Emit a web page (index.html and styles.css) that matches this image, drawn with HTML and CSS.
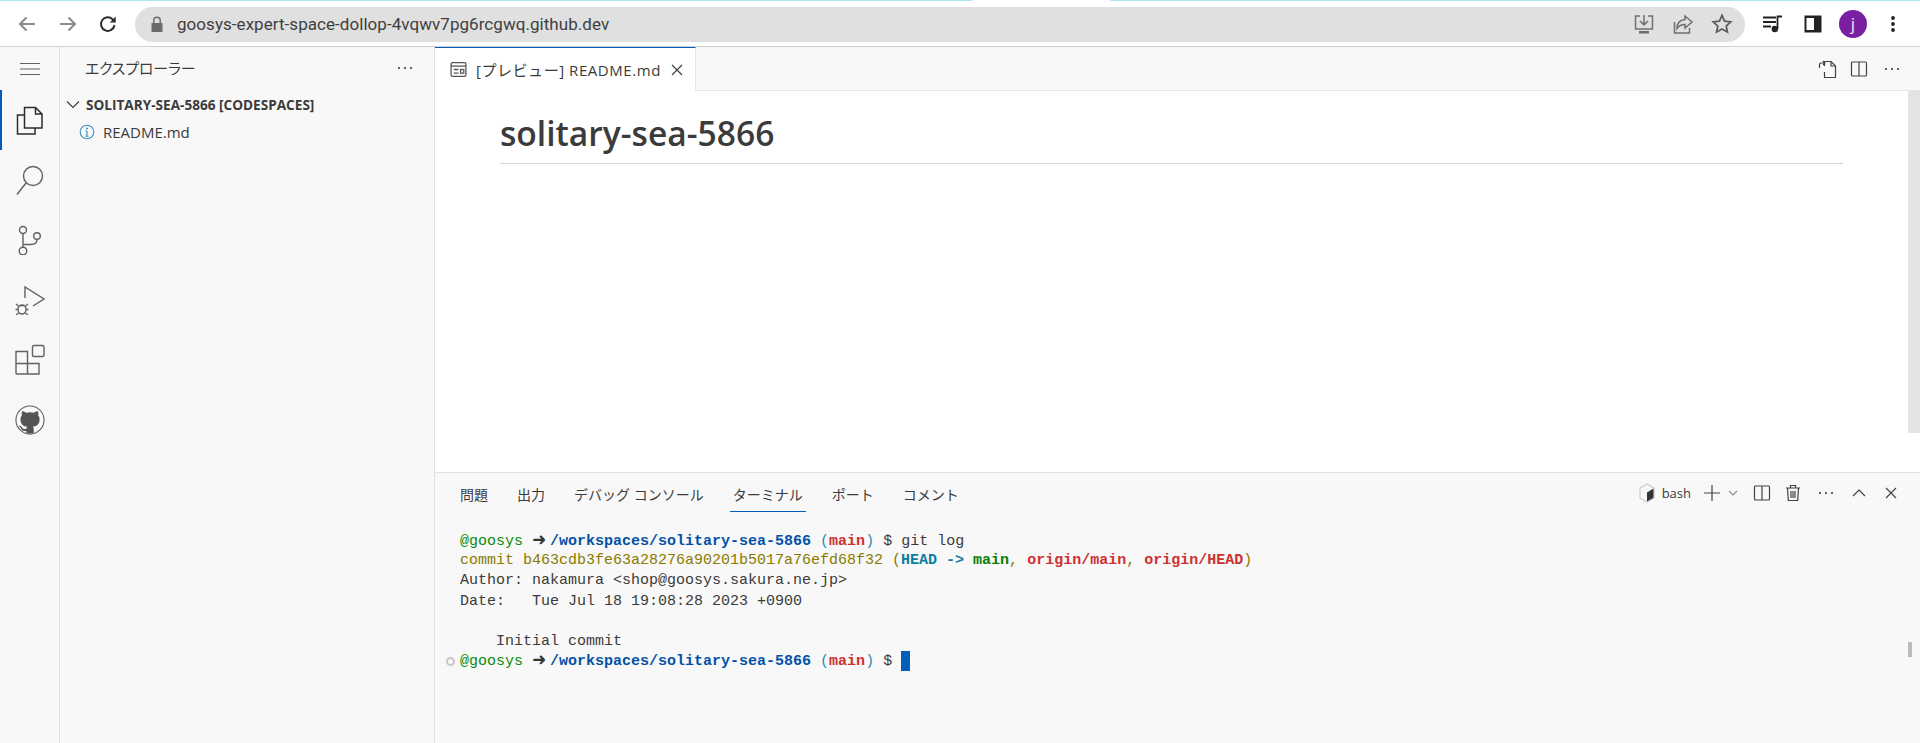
FILE: index.html
```html
<!DOCTYPE html>
<html lang="ja">
<head>
<meta charset="utf-8">
<title>README.md</title>
<link rel="stylesheet" href="styles.css">
</head>
<body>
<header class="chrome">
  <div class="strip"><span class="strip-a"></span><span class="strip-gap"></span><span class="strip-b"></span></div>
  <div class="toolbar">
    <button class="tb tb-back"><svg width="20" height="20" viewBox="0 0 20 20"><path d="M18 10H3M9.500 3.500 3 10l6.500 6.500" class="s-grey"/></svg></button>
    <button class="tb tb-fwd"><svg width="20" height="20" viewBox="0 0 20 20"><path d="M2 10h15M10.500 3.500 17 10l-6.500 6.500" class="s-grey"/></svg></button>
    <button class="tb tb-reload"><svg width="20" height="20" viewBox="0 0 20 20"><path d="M16.500 11a6.800 6.800 0 1 1-1.800-5.600L17 7.700" class="s-dark"/><path d="M17.700 2.500v6h-6z" class="f-dark"/></svg></button>
    <div class="pill">
      <svg class="lock" width="14" height="18" viewBox="0 0 14 18"><path d="M3 8V5.500a4 4 0 0 1 8 0V8h1.500v9h-11V8zm1.500 0h5V5.500a2.500 2.500 0 0 0-5 0z" class="f-mid"/></svg>
      <span class="url">goosys-expert-space-dollop-4vqwv7pg6rcgwq.github.dev</span>
      <span class="pill-icons">
        <svg width="22" height="22" viewBox="0 0 22 22"><path d="M7 3H2.500v13h17V3H15M11 2v9M7 8l4 4 4-4" class="s-grey2"/><path d="M6 18h10v2.500H6z" class="f-mid"/></svg>
        <svg width="22" height="22" viewBox="0 0 22 22"><path d="M2.500 9v11h15v-5" class="s-grey2"/><path d="M13 3l7 6-7 6v-3.500c-4 0-6 1-8 4 0-5 3-8.500 8-9z" class="s-grey2"/></svg>
        <svg width="22" height="22" viewBox="0 0 22 22"><path d="m11 2.500 2.600 5.600 6.100.7-4.500 4.200 1.200 6-5.400-3-5.400 3 1.200-6-4.500-4.200 6.100-.7z" class="s-star"/></svg>
      </span>
    </div>
    <button class="tb tb-first"><svg width="22" height="20" viewBox="0 0 22 20"><path d="M1 3.500h13M1 8h13M1 12.500h8" class="s-ink"/><path d="M15.500 15V2.500H20" class="s-ink"/><circle cx="12.800" cy="15" r="3.200" class="f-ink"/></svg></button>
    <button class="tb"><svg width="20" height="20" viewBox="0 0 20 20"><path d="M1.500 1.500h17v17h-17z" class="f-ink"/><path d="M3.500 4h7.500v12H3.500z" class="f-white"/></svg></button>
    <button class="tb"><span class="avatar">j</span></button>
    <button class="tb"><svg width="6" height="20" viewBox="0 0 6 20"><circle cx="3" cy="4" r="1.900" class="f-ink"/><circle cx="3" cy="10" r="1.900" class="f-ink"/><circle cx="3" cy="16" r="1.900" class="f-ink"/></svg></button>
  </div>
</header>

<main class="workbench">
  <nav class="activity">
    <div class="menu"><svg width="20" height="14" viewBox="0 0 20 14"><path d="M0 1.500h20M0 7h20M0 12.500h20" class="s-act-thin"/></svg></div>
    <div class="act act-on"><svg width="30" height="30" viewBox="0 0 30 30"><path d="M9.500 2.500h11l6.500 6.500v14H9.500zM20.500 2.500V9H27" class="s-act-ink"/><path d="M9.500 10H2.500v19H20v-6" class="s-act-ink"/></svg></div>
    <div class="act"><svg width="30" height="30" viewBox="0 0 30 30"><circle cx="18" cy="11" r="9.500" class="s-act"/><path d="M11 18 2 29.500" class="s-act"/></svg></div>
    <div class="act"><svg width="30" height="30" viewBox="0 0 30 30"><circle cx="8" cy="5" r="3.500" class="s-act"/><circle cx="8" cy="26" r="3.800" class="s-act"/><circle cx="22" cy="11" r="3.300" class="s-act"/><path d="M8 8.500v13.700M22 14.300c0 4-3 5.200-6 5.200H8" class="s-act"/></svg></div>
    <div class="act"><svg width="30" height="30" viewBox="0 0 30 30"><path d="M10 13V2l19 12-11 7" class="s-act"/><ellipse cx="7" cy="24.500" rx="4" ry="4.500" class="s-act"/><path d="M3 24.500H.5M11 24.500h2.500M3.500 21 1 19M10.500 21 13 19M3.500 28 1 30M10.500 28 13 30M4.500 20.500h5" class="s-act"/></svg></div>
    <div class="act"><svg width="30" height="32" viewBox="0 0 30 32"><rect x="17.500" y="1.500" width="11.500" height="11" rx="1.500" class="s-act"/><path d="M1 7.500h11.500v12H24V30H2a1 1 0 0 1-1-1zM1 19.500h11.500V30" class="s-act"/></svg></div>
    <div class="act"><svg width="30" height="30" viewBox="0 0 16 16"><circle cx="8" cy="8" r="7.200" class="f-cat"/><path d="M8 0C3.580 0 0 3.580 0 8c0 3.540 2.290 6.530 5.470 7.590.4.070.55-.17.55-.38 0-.19-.01-.82-.01-1.490-2.010.37-2.530-.49-2.690-.94-.09-.23-.48-.94-.82-1.130-.28-.15-.68-.52-.01-.53.63-.01 1.080.58 1.230.82.72 1.210 1.870.87 2.330.66.070-.52.28-.87.51-1.070-1.780-.2-3.640-.89-3.640-3.950 0-.87.31-1.590.82-2.150-.08-.2-.36-1.020.08-2.120 0 0 .67-.21 2.200.82.64-.18 1.320-.27 2-.27.68 0 1.360.09 2 .27 1.530-1.040 2.200-.82 2.200-.82.44 1.100.16 1.920.08 2.120.51.56.82 1.270.82 2.150 0 3.070-1.870 3.750-3.650 3.950.29.25.54.73.54 1.480 0 1.070-.01 1.930-.01 2.200 0 .21.15.46.55.38A8.013 8.013 0 0016 8c0-4.420-3.580-8-8-8z" class="f-bg"/><circle cx="8" cy="8" r="7.500" class="s-ring"/></svg></div>
  </nav>

  <aside class="sidebar">
    <div class="side-head"><span class="side-title">エクスプローラー</span><svg width="16" height="4" viewBox="0 0 16 4"><circle cx="2" cy="2" r="1.100" class="f-icon"/><circle cx="8" cy="2" r="1.100" class="f-icon"/><circle cx="14" cy="2" r="1.100" class="f-icon"/></svg></div>
    <div class="tree-root"><svg width="14" height="9" viewBox="0 0 14 9"><path d="m1 1.500 6 6 6-6" class="s-thin"/></svg><span>SOLITARY-SEA-5866 [CODESPACES]</span></div>
    <div class="tree-file"><svg width="16" height="16" viewBox="0 0 16 16"><circle cx="8" cy="8" r="6.800" class="s-info"/><path d="M8 7v5M6.500 12.300h3M6.500 7H8" class="s-info"/><circle cx="8" cy="4.500" r="1" class="f-info"/></svg><span>README.md</span></div>
  </aside>

  <section class="content">
    <div class="editor">
      <div class="tabbar">
        <div class="tab">
          <svg width="17" height="17" viewBox="0 0 16 16"><rect x="1" y="1.500" width="14" height="13" rx="1.500" class="s-tab"/><path d="M1 4.800h14" class="s-tab"/><path d="M3.500 8h4.500M3.500 11.500h4.500" class="s-tab"/><rect x="10" y="8" width="3" height="3.500" class="s-tab"/></svg>
          <span class="tab-label">[プレビュー] README.md</span>
          <svg class="tab-close" width="14" height="14" viewBox="0 0 14 14"><path d="m2 2 10 10M12 2 2 12" class="s-thin"/></svg>
        </div>
        <div class="tab-actions">
          <svg width="20" height="20" viewBox="0 0 20 20"><path d="M6.500 7V2.500H13l4.500 4.500v11.500H6.500V13" class="s-icon"/><path d="M13 2.500V7h4.500" class="s-icon"/><path d="M6 4H3a1.500 1.500 0 0 0-1.500 1.500V9M7 4 5 2M7 4 5 6" class="s-icon"/></svg>
          <svg class="ta-split" width="18" height="18" viewBox="0 0 18 18"><rect x="1.500" y="2" width="15" height="14" rx="1" class="s-icon"/><path d="M9 2v14" class="s-icon"/></svg>
          <svg width="16" height="4" viewBox="0 0 16 4"><circle cx="2" cy="2" r="1.100" class="f-icon"/><circle cx="8" cy="2" r="1.100" class="f-icon"/><circle cx="14" cy="2" r="1.100" class="f-icon"/></svg>
        </div>
      </div>
      <div class="preview">
        <div class="doc"><h1>solitary-sea-5866</h1></div>
        <div class="vbar"></div>
      </div>
    </div>

    <div class="panel">
      <div class="panel-head">
        <div class="ptabs">
          <span class="ptab">問題</span>
          <span class="ptab">出力</span>
          <span class="ptab">デバッグ コンソール</span>
          <span class="ptab ptab-on">ターミナル</span>
          <span class="ptab">ポート</span>
          <span class="ptab">コメント</span>
        </div>
        <div class="pactions">
          <span class="shell">
            <svg width="16" height="20" viewBox="0 0 16 20"><path d="M8 1 15 5v10l-7 4-7-4V5z" class="s-hex"/><path d="M14.500 5.500v9.200L8 18.500V9.500z" class="f-ink2"/></svg>
            <span>bash</span>
          </span>
          <svg class="pa-plus" width="16" height="16" viewBox="0 0 16 16"><path d="M0 8h16M8 0v16" class="s-icon"/></svg>
          <svg class="pa-chev" width="10" height="6" viewBox="0 0 10 6"><path d="m1 1 4 4 4-4" class="s-faint"/></svg>
          <svg class="pa-split" width="18" height="18" viewBox="0 0 18 18"><rect x="1.500" y="2" width="15" height="14" rx="1" class="s-icon"/><path d="M9 2v14" class="s-icon"/></svg>
          <svg class="pa-trash" width="16" height="18" viewBox="0 0 16 18"><path d="M1 4h14M5.500 4V1.500h5V4M2.500 4l.8 12.500h9.400l.8-12.500M6 7v7M8 7v7M10 7v7" class="s-icon"/></svg>
          <svg class="pa-more" width="16" height="4" viewBox="0 0 16 4"><circle cx="2" cy="2" r="1.100" class="f-icon"/><circle cx="8" cy="2" r="1.100" class="f-icon"/><circle cx="14" cy="2" r="1.100" class="f-icon"/></svg>
          <svg class="pa-up" width="14" height="8" viewBox="0 0 14 8"><path d="m1 7 6-6 6 6" class="s-thin"/></svg>
          <svg class="pa-close" width="14" height="14" viewBox="0 0 14 14"><path d="m2 2 10 10M12 2 2 12" class="s-icon"/></svg>
        </div>
      </div>
      <div class="terminal">
<div class="line"><span class="t-green">@goosys</span> <span class="t-arrow">➜</span><b class="t-blue">/workspaces/solitary-sea-5866</b> <span class="t-cyan">(</span><b class="t-red">main</b><span class="t-cyan">)</span> $ git log</div>
<div class="line"><span class="t-olive">commit b463cdb3fe63a28276a90201b5017a76efd68f32 (</span><b class="t-teal">HEAD -&gt; </b><b class="t-lime">main</b><span class="t-olive">, </span><b class="t-red">origin/main</b><span class="t-olive">, </span><b class="t-red">origin/HEAD</b><span class="t-olive">)</span></div>
<div class="line">Author: nakamura &lt;shop@goosys.sakura.ne.jp&gt;</div>
<div class="line">Date:   Tue Jul 18 19:08:28 2023 +0900</div>
<div class="line"> </div>
<div class="line">    Initial commit</div>
<div class="line prompt"><span class="deco"></span><span class="t-green">@goosys</span> <span class="t-arrow">➜</span><b class="t-blue">/workspaces/solitary-sea-5866</b> <span class="t-cyan">(</span><b class="t-red">main</b><span class="t-cyan">)</span> $ <span class="cursor"></span></div>
      </div>
      <div class="term-thumb"></div>
    </div>
  </section>
</main>
</body>
</html>
```

FILE: styles.css
```css
* { box-sizing: border-box; }
html, body { margin: 0; height: 100%; }
body {
  width: 1920px; height: 743px; overflow: hidden; background: #fff; color: #3b3b3b;
  font-family: "Open Sans", "Noto Sans CJK JP", sans-serif;
  display: flex; flex-direction: column;
}
svg { display: block; flex: none; fill: none; }

/* browser chrome */
.chrome { height: 47px; flex: none; background: #fff; border-bottom: 1px solid #d0d0d0; }
.strip { display: flex; height: 1px; background: #aee8f4; }
.strip-a { width: 972px; }
.strip-gap { width: 138px; background: #fff; }
.strip-b { flex: 1; }
.toolbar { display: flex; align-items: center; height: 45px; padding: 5px 8px 4px 7px; }
.tb { width: 40px; height: 36px; padding: 0; border: 0; background: none; display: flex; align-items: center; justify-content: center; flex: none; }
.tb-fwd { margin-left: 1px; }
.tb-reload { margin-left: 0; }
.pill { width: 1610px; margin-left: 7px; height: 35px; border-radius: 18px; background: #e0e0e0; display: flex; align-items: center; padding: 0 12px 0 15px; flex: none; }
.lock { margin-right: 13px; }
.url { font: 400 17px/22px Roboto, sans-serif; letter-spacing: .05px; color: #3f3f3f; white-space: nowrap; }
.pill-icons { margin-left: auto; display: flex; gap: 17px; }
.tb-first { margin-left: 8px; }
.avatar { width: 28px; height: 28px; border-radius: 50%; background: #7b1fa2; color: #f2e6f7; font: 400 17px/27px "Open Sans", sans-serif; text-align: center; }
.s-grey { stroke: #8a8a8a; stroke-width: 2; }
.s-dark { stroke: #2e2e2e; stroke-width: 2; }
.f-dark { fill: #2e2e2e; }
.f-mid { fill: #6b6b6b; }
.s-grey2 { stroke: #6f6f6f; stroke-width: 1.500; }
.s-star { stroke: #5f5f5f; stroke-width: 1.800; }
.s-ink { stroke: #222; stroke-width: 1.800; }
.f-ink { fill: #222; }
.f-ink2 { fill: #333; }
.f-white { fill: #fff; }

/* workbench */
.workbench { flex: 1; min-height: 0; display: flex; }
.activity { width: 60px; flex: none; background: #f8f8f8; border-right: 1px solid #e1e1e1; display: flex; flex-direction: column; }
.menu { height: 43px; display: flex; align-items: center; justify-content: center; }
.act { height: 60px; display: flex; align-items: center; justify-content: center; }
.act-on { box-shadow: inset 2px 0 0 #005fb8; }
.s-act { stroke: #616161; stroke-width: 1.400; }
.s-act-ink { stroke: #2c2c2c; stroke-width: 1.500; }
.s-act-thin { stroke: #616161; stroke-width: 1.100; }
.f-cat { fill: #555; }
.f-bg { fill: #f8f8f8; }
.s-ring { stroke: #616161; stroke-width: .6; }

.sidebar { width: 375px; flex: none; background: #f8f8f8; border-right: 1px solid #e1e1e1; }
.side-head { height: 44px; display: flex; align-items: center; justify-content: space-between; padding: 0 21px 2px 25px; }
.side-title { font-size: 14.800px; line-height: 20px; font-feature-settings: "palt"; }
.tree-root { height: 27px; display: flex; align-items: center; padding-left: 6px; gap: 6px; font-size: 13.600px; font-weight: 700; color: #3b3b3b; white-space: nowrap; }
.tree-file { height: 27px; display: flex; align-items: center; padding-left: 19px; gap: 8px; font-size: 15px; }
.s-thin { stroke: #3b3b3b; stroke-width: 1.100; }
.s-info { stroke: #3d8fb8; stroke-width: 1.100; }
.f-info { fill: #3d8fb8; }
.f-icon { fill: #424242; }
.s-icon { stroke: #424242; stroke-width: 1.200; }
.s-tab { stroke: #555; stroke-width: 1.200; }
.s-faint { stroke: #8a8a8a; stroke-width: 1.100; }
.s-hex { stroke: #c9c9c9; stroke-width: 1.100; }

.content { flex: 1; min-width: 0; display: flex; flex-direction: column; }
.editor { height: 425px; flex: none; display: flex; flex-direction: column; background: #fff; }
.tabbar { height: 44px; flex: none; background: #f8f8f8; border-bottom: 1px solid #e5e5e5; display: flex; justify-content: space-between; }
.tab { width: 261px; height: 44px; background: #fff; border-top: 1px solid #005fb8; border-right: 1px solid #e5e5e5; display: flex; align-items: center; padding-left: 15px; }
.tab-label { margin-left: 9px; font-size: 15px; letter-spacing: .55px; line-height: 20px; white-space: nowrap; }
.tab-close { margin-left: auto; margin-right: 11px; }
.tab-actions { display: flex; align-items: center; gap: 14px; padding-right: 20px; }
.ta-split { margin: 0 2px 0 -2px; }
.preview { flex: 1; min-height: 0; display: flex; justify-content: space-between; }
.doc { flex: 1; padding: 0 65px 0 65px; }
h1 { margin: 0; height: 73px; padding-top: 21px; border-bottom: 1px solid #d4d4d4; font-size: 33.600px; font-weight: 600; line-height: 42px; color: #3b3b3b; }
.vbar { width: 12px; height: 342px; background: #e2e3e5; flex: none; }

.panel { flex: 1; min-height: 0; position: relative; background: #f8f8f8; border-top: 1px solid #e1e1e1; }
.panel-head { height: 40px; display: flex; justify-content: space-between; }
.ptabs { display: flex; gap: 23px; padding-left: 22px; }
.ptab { height: 39px; padding: 12px 3px 0; font-size: 14px; line-height: 20px; white-space: nowrap; }
.ptab-on { border-bottom: 1px solid #005fb8; }
.pactions { display: flex; align-items: center; padding-right: 22px; }
.shell { display: flex; align-items: center; gap: 7px; font-size: 13px; margin-right: 13px; }
.pa-chev { margin-left: 8px; }
.pa-split { margin-left: 15px; }
.pa-trash { margin-left: 14px; }
.pa-more { margin-left: 17px; }
.pa-up { margin-left: 18px; }
.pa-close { margin-left: 18px; }

.terminal { padding: 18px 0 0 25px; font: 15px/20.200px "Liberation Mono", monospace; color: #3b3b3b; }
.line { white-space: pre; height: 20.200px; }
.prompt { position: relative; margin-top: -1px; }
.deco { position: absolute; left: -14px; top: 6px; width: 9px; height: 9px; border-radius: 50%; border: 2px solid #c8c8c8; }
.cursor { display: inline-block; width: 9px; height: 20px; background: #005fb8; vertical-align: top; }
.t-green { color: #0b8a0b; }
.t-arrow { display: inline-block; width: 18px; color: #333; font: 700 17px/1 "DejaVu Sans", sans-serif; }
.t-blue { color: #0451a5; }
.t-cyan { color: #2a8ab8; }
.t-red { color: #cd3131; }
.t-olive { color: #8a7a00; }
.t-teal { color: #0a7f9f; }
.t-lime { color: #0a7d0a; }
.term-thumb { position: absolute; right: 8px; top: 169px; width: 4px; height: 15px; background: #bbb; }
```
